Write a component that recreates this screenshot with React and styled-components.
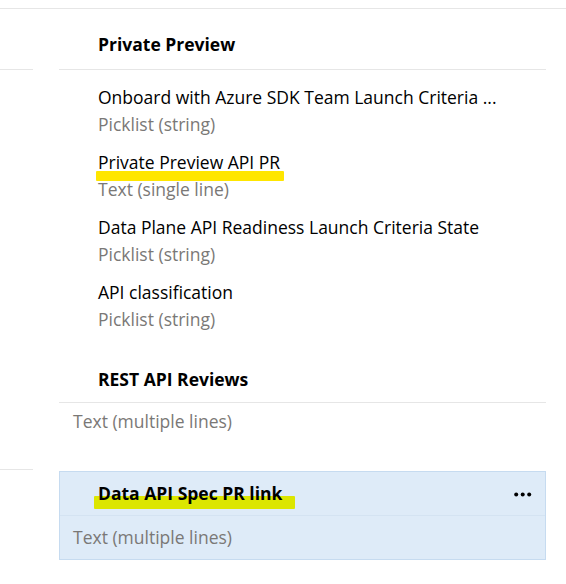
import React from "react";
import styled, { createGlobalStyle } from "styled-components";

const GlobalStyle = createGlobalStyle`
  html, body { margin: 0; padding: 0; background: #ffffff; }
  body {
    font-family: "Open Sans", "Noto Sans", sans-serif;
    font-size: 17.5px;
    color: #000000;
    -webkit-font-smoothing: antialiased;
  }
`;

const Page = styled.div`
  width: 566px;
  height: 584px;
  padding-top: 8px;
  box-sizing: border-box;
  overflow: hidden;
`;

const Frame = styled.div`
  border-top: 1px solid #e6e6e6;
  display: grid;
  grid-template-columns: 33px 487px;
  column-gap: 26px;
  align-items: start;
`;

const LeftPane = styled.div`
  display: flex;
  flex-direction: column;
`;

const Stub = styled.div`
  height: ${(p) => p.$h}px;
  border-bottom: 1px solid #e6e6e6;
`;

const Main = styled.div`
  display: flex;
  flex-direction: column;
`;

const SectionHeader = styled.div`
  padding: ${(p) => p.$top}px 0 ${(p) => p.$bottom}px 39px;
  border-bottom: 1px solid #e6e6e6;
  font-weight: 700;
  line-height: 24px;
`;

const FieldList = styled.div`
  display: flex;
  flex-direction: column;
  gap: 11px;
  padding: 13.5px 0 0 39px;
`;

const Field = styled.div`
  display: flex;
  flex-direction: column;
`;

const FieldTitle = styled.div`
  line-height: 27px;
  white-space: nowrap;
`;

const FieldType = styled.div`
  line-height: 27px;
  color: #7a7876;
  white-space: nowrap;
`;

const Marked = styled.span`
  position: relative;
  display: inline-block;
  isolation: isolate;
`;

const Stroke = styled.span`
  position: absolute;
  z-index: -1;
  left: ${(p) => p.$left}px;
  top: ${(p) => p.$top}px;
  width: ${(p) => p.$w}px;
  height: ${(p) => p.$h}px;
  background: ${(p) => p.$color};
  border-radius: 1px;
`;

const LooseType = styled.div`
  padding: 5.5px 0 0 14px;
  line-height: 27px;
  color: #7a7876;
`;

const Card = styled.div`
  margin-top: 35.5px;
  background: #deebf8;
  border: 1px solid #c6dbf0;
  display: flex;
  flex-direction: column;
`;

const CardHeader = styled.div`
  height: 44px;
  box-sizing: border-box;
  display: flex;
  align-items: center;
  justify-content: space-between;
  padding: 0 13px 0 38px;
  border-bottom: 1px solid #d4e3f2;
  font-weight: 700;
  line-height: 24px;
`;

const CardBody = styled.div`
  height: 43px;
  box-sizing: border-box;
  padding: 8px 0 0 13px;
  line-height: 27px;
  color: #7a7876;
`;

const MoreButton = styled.span`
  display: flex;
  align-items: center;
  margin-top: 2px;
`;

const fields = [
  { title: "Onboard with Azure SDK Team Launch Criteria ...", type: "Picklist (string)" },
  { title: "Private Preview API PR", type: "Text (single line)", marked: true },
  { title: "Data Plane API Readiness Launch Criteria State", type: "Picklist (string)" },
  { title: "API classification", type: "Picklist (string)" },
];

export default function App() {
  return (
    <>
      <GlobalStyle />
      <Page>
        <Frame>
          <LeftPane>
            <Stub $h={60} />
            <Stub $h={399} />
          </LeftPane>
          <Main>
            <SectionHeader $top={23} $bottom={13}>Private Preview</SectionHeader>
            <FieldList>
              {fields.map((f) => (
                <Field key={f.title}>
                  <FieldTitle>
                    {f.marked ? (
                      <Marked>
                        {f.title}
                        <Stroke $left={-2} $top={22.5} $w={188} $h={10} $color="#ffe600" />
                      </Marked>
                    ) : (
                      f.title
                    )}
                  </FieldTitle>
                  <FieldType>{f.type}</FieldType>
                </Field>
              ))}
            </FieldList>
            <SectionHeader $top={34} $bottom={11}>REST API Reviews</SectionHeader>
            <LooseType>Text (multiple lines)</LooseType>
            <Card>
              <CardHeader>
                <Marked>
                  Data API Spec PR link
                  <Stroke $left={-4} $top={15} $w={201} $h={13} $color="#dce600" />
                </Marked>
                <MoreButton>
                  <svg width="18" height="5" viewBox="0 0 18 5" aria-hidden="true">
                    <circle cx="2.2" cy="2.5" r="2" fill="#000" />
                    <circle cx="8.7" cy="2.5" r="2" fill="#000" />
                    <circle cx="15.2" cy="2.5" r="2" fill="#000" />
                  </svg>
                </MoreButton>
              </CardHeader>
              <CardBody>Text (multiple lines)</CardBody>
            </Card>
          </Main>
        </Frame>
      </Page>
    </>
  );
}
